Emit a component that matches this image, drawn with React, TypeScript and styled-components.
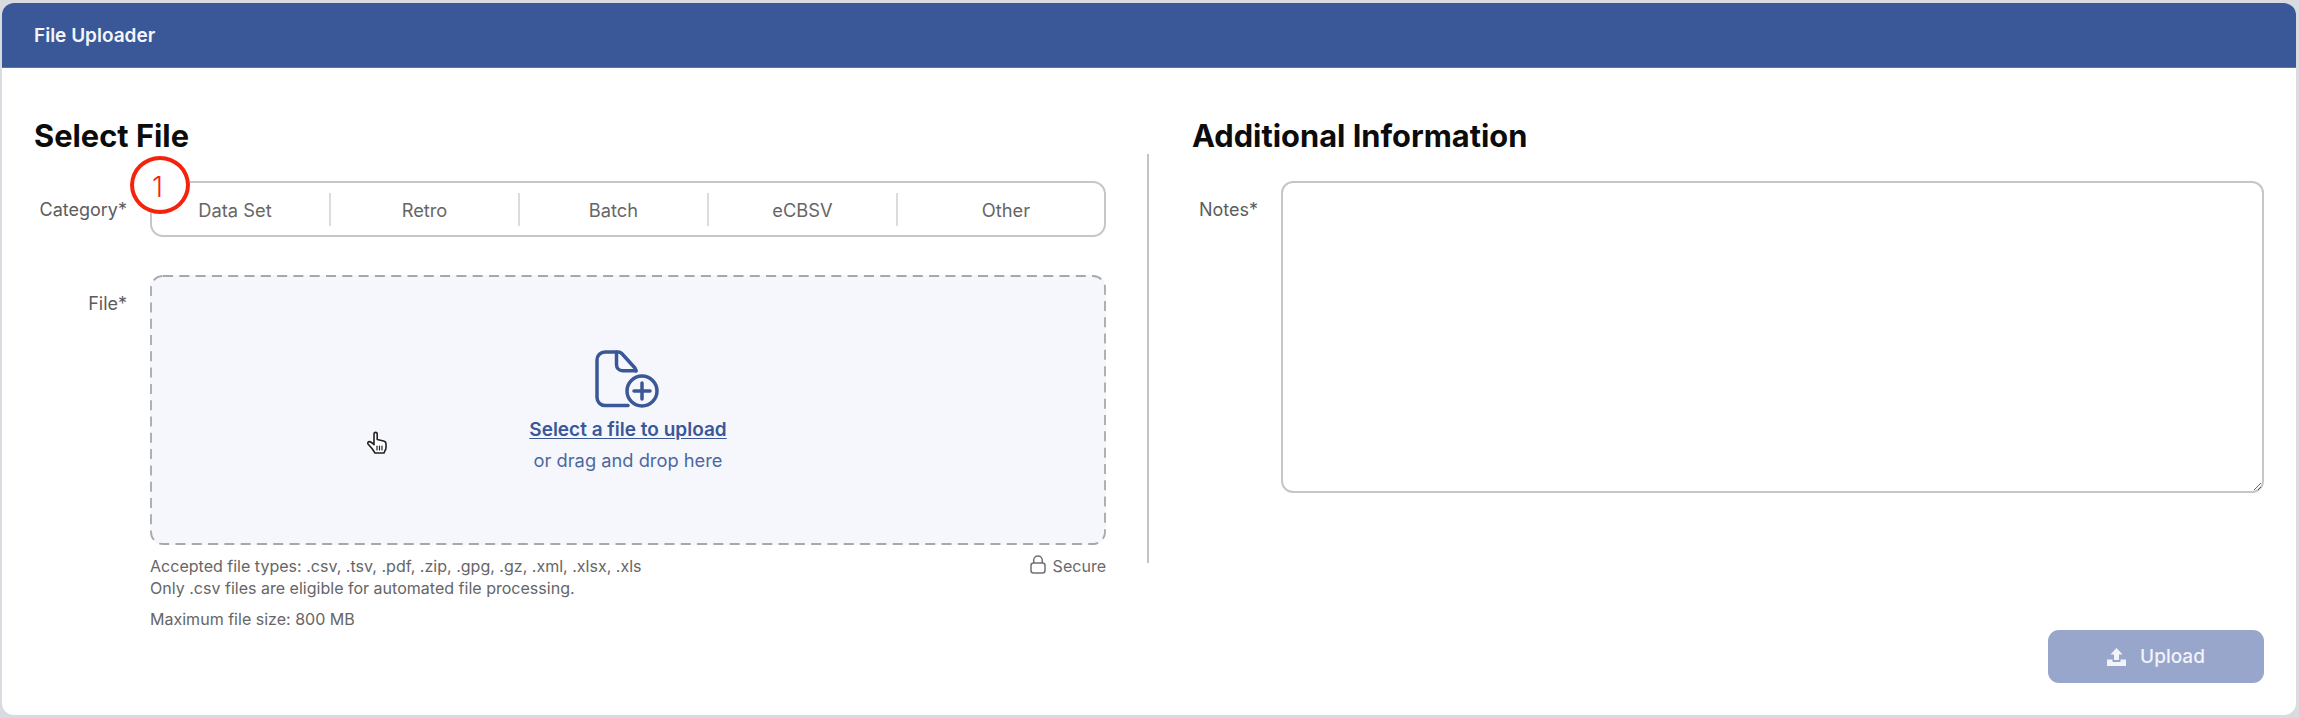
import styled, { createGlobalStyle } from "styled-components";

const GlobalStyle = createGlobalStyle`
  html, body {
    margin: 0;
    padding: 0;
    background-color: #d9dbe0;
  }
  * {
    box-sizing: border-box;
  }
  body {
    font-family: Inter, "Liberation Sans", sans-serif;
  }
`;

const Page = styled.div`
  width: 2299px;
  height: 718px;
  padding: 3px 3px 3px 2px;
  overflow: hidden;
`;
const Window = styled.div`
  height: 712px;
  background-color: #fff;
  border-radius: 12px;
  overflow: hidden;
`;
const Header = styled.div`
  height: 65px;
  display: flex;
  align-items: center;
  padding: 0 32px;
  background-color: #3a5897;
  border-bottom: 1px solid #4a78c0;
  color: #f4f6fb;
  font-size: 19px;
  font-weight: 600;
`;
const Body = styled.div`
  display: flex;
  padding: 49px 32px 0;
`;
const Column = styled.div<{ $width: number }>`
  width: ${(p) => p.$width}px;
  flex: none;
  display: flex;
  flex-direction: column;
`;
const Title = styled.h2`
  margin: 1px 0 27px;
  font-size: 30.8px;
  line-height: 36px;
  font-weight: 700;
  color: #0c0c0c;
`;
const Row = styled.div`
  display: flex;
  gap: 23px;
`;
const Label = styled.div<{ $width: number; $top: number }>`
  width: ${(p) => p.$width}px;
  flex: none;
  padding-top: ${(p) => p.$top}px;
  text-align: right;
  font-size: 18px;
  line-height: 22px;
  color: #5c5c5c;
`;
const Control = styled.div`
  flex: 1;
  position: relative;
`;
const Segments = styled.div`
  height: 56px;
  display: flex;
  align-items: center;
  padding-top: 1px;
  border: 2px solid #c6c6c6;
  border-radius: 13px;
`;
const Segment = styled.div<{ $size: number; $pl?: number; $pr?: number }>`
  width: ${(p) => p.$size}px;
  flex: none;
  height: 33px;
  display: flex;
  align-items: center;
  justify-content: center;
  padding-left: ${(p) => p.$pl ?? 0}px;
  padding-right: ${(p) => p.$pr ?? 0}px;
  font-size: 18.3px;
  color: #666;
  border-right: 2px solid ${(p) => (p.$pl ? "transparent" : "#dcdcdc")};
`;
const Marker = styled.div`
  position: absolute;
  left: -20px;
  top: -25px;
  width: 60px;
  height: 58px;
  display: flex;
  align-items: center;
  justify-content: center;
  padding: 4px 5px 0 0;
  border: 4px solid #f5230c;
  border-radius: 50%;
  background-color: #fff;
  color: #f5230c;
  font-size: 28px;
  font-weight: 300;
`;
const Drop = styled(Row)`
  margin-top: 38px;
`;
const DropZone = styled.div`
  position: relative;
  height: 270px;
  display: flex;
  flex-direction: column;
  align-items: center;
  padding-top: 70px;
  border-radius: 13px;
  background-color: #f6f7fc;
`;
const Dashes = styled.svg`
  position: absolute;
  left: 0;
  top: 0;
  width: 100%;
  height: 100%;
  overflow: visible;
`;
const DocIcon = styled.svg`
  width: 72px;
  height: 67px;
  margin-left: -8px;
`;
const SelectLink = styled.a`
  margin-top: 6px;
  font-size: 19px;
  line-height: 24px;
  font-weight: 600;
  color: #3a5897;
  text-decoration: underline;
  text-underline-offset: 2px;
`;
const DragText = styled.div`
  margin-top: 6px;
  font-size: 18.3px;
  line-height: 24px;
  color: #4c689f;
`;
const Hand = styled.svg`
  position: absolute;
  left: 216px;
  top: 156px;
  width: 22px;
  height: 23px;
`;
const Hints = styled.div`
  display: flex;
  justify-content: space-between;
  margin-top: 10px;
  font-size: 16.05px;
  line-height: 22px;
  color: #666;
`;
const Secure = styled.div`
  display: flex;
  align-items: flex-start;
  gap: 7px;
  color: #6a6a6a;
`;
const MaxSize = styled.div`
  margin-top: 9px;
`;
const VLine = styled.div`
  flex: none;
  width: 2px;
  height: 409px;
  margin: 37px 43px 0 41px;
  background-color: #c4c4c4;
`;
const Notes = styled.textarea`
  display: block;
  width: 100%;
  height: 312px;
  border: 2px solid #c6c6c6;
  border-radius: 12px;
  outline: none;
  background-color: #fff;
`;
const UploadButton = styled.button`
  align-self: flex-end;
  width: 216px;
  height: 53px;
  margin-top: 137px;
  display: flex;
  align-items: center;
  justify-content: center;
  gap: 14px;
  border: none;
  border-radius: 11px;
  background-color: #98a6cb;
  color: #f2f4fa;
  font-family: inherit;
  font-size: 19px;
  font-weight: 500;
`;

const categories = ["Data Set", "Retro", "Batch", "eCBSV", "Other"];

function App() {
  return (
    <>
      <GlobalStyle />
      <Page>
        <Window>
          <Header>File Uploader</Header>
          <Body>
            <Column $width={1072}>
              <Title>Select File</Title>
              <Row>
                <Label $width={93} $top={18}>Category*</Label>
                <Control>
                  <Segments>
                    {categories.map((c, i) => (
                      <Segment
                        key={c}
                        $size={i === 0 ? 179 : i === 4 ? 205 : 189}
                        $pr={i === 0 ? 11 : 0}
                        $pl={i === 4 ? 13 : 0}
                      >
                        {c}
                      </Segment>
                    ))}
                  </Segments>
                  <Marker>1</Marker>
                </Control>
              </Row>
              <Drop>
                <Label $width={93} $top={18}>File*</Label>
                <Control>
                  <DropZone>
                    <Dashes>
                      <rect x="1" y="1" width="954" height="268" rx="12" fill="none" stroke="#a8a8a8" strokeWidth="1.800" strokeDasharray="10 6.300" />
                    </Dashes>
                    <DocIcon viewBox="590 345 72 67" fill="none" stroke="#3a5897" strokeWidth="3.500" strokeLinecap="round" strokeLinejoin="round">
                      <path d="M630 405.500H607a8 8 0 0 1-8-8V360a8 8 0 0 1 8-8h13c1.500 0 3 .6 4 1.700l12.500 13.800c1 1.100 1.500 2 1.500 3.500" />
                      <path d="M618.500 352v12.500c0 3.500 2.500 6.200 6 6.200H638" />
                      <circle cx="644" cy="391" r="15" />
                      <path d="M644 383v16M636 391h16" />
                    </DocIcon>
                    <SelectLink>Select a file to upload</SelectLink>
                    <DragText>or drag and drop here</DragText>
                    <Hand viewBox="0 0 22 23" fill="#fff" stroke="#222" strokeWidth="1.600" strokeLinejoin="round" strokeLinecap="round">
                      <path d="M8 10V3a1.600 1.600 0 0 1 3.200 0v5.500l6.300 1.500c1.500.4 2.500 1.500 2.500 3v3.500c0 1.500-.5 2.500-1.200 3.500l-.8 2H9l-3-4.500-4-4.500c-.6-1 0-2.400 1.500-2.400 1.200 0 2.300 1 4.500 3z" />
                      <path d="M11 15v4M13.500 15v4M16 15v4" strokeWidth="1.200" />
                    </Hand>
                  </DropZone>
                  <Hints>
                    <div>
                      Accepted file types: .csv, .tsv, .pdf, .zip, .gpg, .gz, .xml, .xlsx, .xls
                      <br />
                      Only .csv files are eligible for automated file processing.
                      <MaxSize>Maximum file size: 800 MB</MaxSize>
                    </div>
                    <Secure>
                      <svg width="16" height="19" viewBox="0 0 16 19" fill="none" stroke="#707070" strokeWidth="1.500">
                        <rect x="1" y="8" width="14" height="10" rx="2.500" />
                        <path d="M3.700 8V5.300a4.300 4.300 0 0 1 8.600 0V8" />
                      </svg>
                      Secure
                    </Secure>
                  </Hints>
                </Control>
              </Drop>
            </Column>
            <VLine />
            <Column $width={1072}>
              <Title>Additional Information</Title>
              <Row>
                <Label $width={66} $top={18}>Notes*</Label>
                <Control>
                  <Notes />
                </Control>
              </Row>
              <UploadButton>
                <svg width="19" height="18" viewBox="0 0 19 18" fill="#f2f4fa">
                  <path d="M9.500 0l6 6.500H12V12H7V6.500H3.500z" />
                  <path d="M0 11.500h5.500V14h8v-2.500H19V18H0z" />
                </svg>
                Upload
              </UploadButton>
            </Column>
          </Body>
        </Window>
      </Page>
    </>
  );
}

export default App;
